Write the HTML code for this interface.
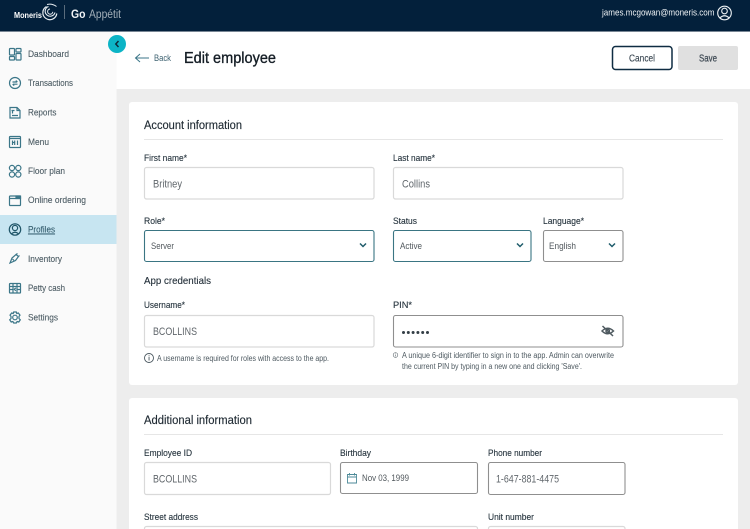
<!DOCTYPE html>
<html lang="en">
<head>
<meta charset="utf-8">
<title>Edit employee</title>
<style>
html,body{margin:0;padding:0;width:750px;height:529px;overflow:hidden;background:#ededed}
svg{display:block;font-family:"Liberation Sans",Arial,sans-serif;filter:blur(.3px)}
.nav{font-size:9.6px;fill:#4a5a62;stroke:#4a5a62;stroke-width:.1}
.lab{font-size:9.4px;fill:#26343e;stroke:#26343e;stroke-width:.12}
.val{font-size:10.8px;fill:#61676c}
.sel{font-size:9.4px;fill:#50575c}
.note{font-size:8px;fill:#4d5960}
.h{font-size:12.2px;fill:#1f2a33;stroke:#1f2a33;stroke-width:.15}
.ic{fill:none;stroke:#3b7688;stroke-width:1.2}
.lt{fill:#fff;stroke:#d9d9d9;stroke-width:1.2}
.dk{fill:#fff;stroke:#8f8f8f;stroke-width:1.1}
.tl{fill:#fff;stroke:#3a7583;stroke-width:1.1}
.chev{fill:none;stroke:#1f5c6b;stroke-width:1.5}
</style>
</head>
<body>
<svg width="750" height="529" viewBox="0 0 750 529" xmlns="http://www.w3.org/2000/svg">
<rect width="750" height="529" fill="#ededed"/>
<!-- header -->
<rect width="750" height="31.5" fill="#03203b"/>
<text x="14" y="18" font-size="8.4" font-weight="700" fill="#fff" textLength="28" lengthAdjust="spacingAndGlyphs">Moneris</text>
<g fill="none" stroke="#e8eef2">
<path d="M46.500 6.500A7 7 0 1 0 56.800 13.500" stroke-width="1.200"/>
<path d="M48.500 6.500A5 5 0 1 0 55 12.500" stroke-width="1.100"/>
<path d="M50 9A2.600 2.600 0 1 0 52.800 11.800" stroke-width="1"/>
<path d="M47 4.500Q52 3.200 56.500 6.500" stroke-width="1"/>
</g>
<rect x="64" y="5" width="1" height="14" fill="#5a6c7c"/>
<text x="71" y="18" font-size="12" font-weight="700" fill="#f2f4f6" textLength="14.500" lengthAdjust="spacingAndGlyphs">Go</text>
<text x="89" y="18" font-size="11.500" fill="#a3afb9" textLength="32" lengthAdjust="spacingAndGlyphs">Appétit</text>
<text x="602" y="15.500" font-size="9.200" fill="#eef2f5" textLength="112.500" lengthAdjust="spacingAndGlyphs">james.mcgowan@moneris.com</text>
<g fill="none" stroke="#eef2f5" stroke-width="1.100"><circle cx="724.500" cy="13" r="6.800"/><circle cx="724.500" cy="11" r="2.800"/><path d="M719.800 18Q724.500 13.500 729.200 18"/></g>
<!-- sidebar -->
<rect x="0" y="32" width="116.500" height="497" fill="#fafafa"/>
<rect x="0" y="215" width="116.500" height="29" fill="#c7e5f1"/>
<!-- main header -->
<rect x="116.500" y="32" width="633.500" height="57" fill="#fff"/>
<circle cx="117" cy="44" r="9" fill="#0cb4c6"/>
<path d="M118.500 41L115.800 44L118.500 47" fill="none" stroke="#0c2a3a" stroke-width="1.500"/>
<!-- nav icons -->
<g class="ic">
<rect x="9.500" y="48.500" width="5" height="6.500" rx=".8"/><rect x="9.500" y="56.500" width="5" height="3.500" rx=".8"/><rect x="16" y="48.500" width="5" height="3.500" rx=".8"/><rect x="16" y="53.500" width="5" height="6.500" rx=".8"/>
<circle cx="15" cy="83" r="5.500"/><path d="M12.500 82H17M15.800 80.600L17.400 82M17.500 84.200H13M14.200 85.600L12.600 84.200"/>
<path d="M10 107.500h7l3 3v7.500h-10zM17 107.500v3h3M12 115.500h6M12.500 110v3.500M14.500 110.500h-3"/>
<rect x="9.500" y="136.500" width="11" height="11" rx=".8"/><path d="M9.500 138.500h11M12.500 140.500v4.500M14.700 140.500v4.500M12.500 142.500h2.200M17.500 140.500v4.500"/>
<circle cx="12" cy="168" r="2.600"/><circle cx="18.300" cy="168" r="2.600"/><circle cx="12" cy="174.500" r="2.600"/><circle cx="18.300" cy="174.500" r="2.600"/>
<rect x="9.500" y="196" width="11" height="9.500" rx=".8"/><path d="M9.500 198.500h11"/><rect x="16" y="196" width="4.500" height="2.500" fill="#3b7688"/>
<circle cx="15" cy="229.500" r="5.700" stroke="#1f5568"/><circle cx="15" cy="228" r="2.600" stroke="#1f5568"/><path d="M11.500 233.800Q15 230.800 18.500 233.800" stroke="#1f5568"/>
<path d="M10 263L12 258L16 254.500L18.500 256.500L15.500 260.500ZM16 254.500L17.500 253.500M18.500 256.500L19.500 255.500M12.500 259L14 260.500"/>
<rect x="9.500" y="283.500" width="11" height="9.500" rx=".8"/><path d="M9.500 286.500h11M13 283.500v9.500M17 283.500v9.500M9.500 289.500h3.500M17 289.500h3.500M15.800 287.800L14.300 289.300L15.800 290.800"/>
<circle cx="15" cy="317.500" r="2.300"/><path d="M13.700 312L16.300 312L16.800 313.600L18.300 313L20 315.100L19 316.400L19 318.500L20.300 319.800L18.800 322L17.100 321.500L16.300 323H13.700L12.900 321.500L11.200 322L9.700 319.800L11 318.500L11 316.400L10 315.100L11.700 313L13.200 313.600Z"/>
</g>
<!-- nav labels -->
<g class="nav">
<text x="28" y="57" textLength="41" lengthAdjust="spacingAndGlyphs">Dashboard</text>
<text x="28" y="86" textLength="45" lengthAdjust="spacingAndGlyphs">Transactions</text>
<text x="28" y="115.500" textLength="28.500" lengthAdjust="spacingAndGlyphs">Reports</text>
<text x="28" y="145" textLength="21" lengthAdjust="spacingAndGlyphs">Menu</text>
<text x="28" y="174" textLength="37" lengthAdjust="spacingAndGlyphs">Floor plan</text>
<text x="28" y="203" textLength="58" lengthAdjust="spacingAndGlyphs">Online ordering</text>
<text x="28" y="232.500" textLength="27" lengthAdjust="spacingAndGlyphs" fill="#2d5c70" text-decoration="underline">Profiles</text>
<text x="28" y="262" textLength="34" lengthAdjust="spacingAndGlyphs">Inventory</text>
<text x="28" y="291" textLength="37" lengthAdjust="spacingAndGlyphs">Petty cash</text>
<text x="28" y="320.500" textLength="30" lengthAdjust="spacingAndGlyphs">Settings</text>
</g>
<!-- top bar -->
<path d="M149 58H136M140 54L135.500 58L140 62" fill="none" stroke="#3b7688" stroke-width="1"/>
<text x="154" y="61" font-size="9.600" fill="#3f6372" textLength="17" lengthAdjust="spacingAndGlyphs">Back</text>
<text x="184" y="63" font-size="15.500" fill="#141d25" stroke="#141d25" stroke-width=".35" textLength="92" lengthAdjust="spacingAndGlyphs">Edit employee</text>
<rect x="612.500" y="46.500" width="59.500" height="23" rx="3" fill="#fff" stroke="#0f2c42" stroke-width="1.500"/>
<text x="629" y="61.300" font-size="9.800" fill="#36434e" stroke="#36434e" stroke-width=".1" textLength="26" lengthAdjust="spacingAndGlyphs">Cancel</text>
<rect x="678" y="46" width="60" height="24" rx="2" fill="#e0e0e0"/>
<text x="699" y="61.300" font-size="9.800" fill="#3f4a54" stroke="#3f4a54" stroke-width=".25" textLength="18" lengthAdjust="spacingAndGlyphs">Save</text>
<!-- card 1 -->
<rect x="129" y="102" width="609" height="283" rx="3" fill="#fff"/>
<text class="h" x="144" y="129" textLength="98" lengthAdjust="spacingAndGlyphs">Account information</text>
<rect x="144" y="139" width="579" height="1" fill="#e6e6e6"/>
<g class="lab">
<text x="144" y="161" textLength="43" lengthAdjust="spacingAndGlyphs">First name*</text>
<text x="393" y="161" textLength="42" lengthAdjust="spacingAndGlyphs">Last name*</text>
<text x="144" y="224" textLength="21" lengthAdjust="spacingAndGlyphs">Role*</text>
<text x="393" y="224" textLength="24" lengthAdjust="spacingAndGlyphs">Status</text>
<text x="543" y="224" textLength="41" lengthAdjust="spacingAndGlyphs">Language*</text>
<text x="144" y="308" textLength="41" lengthAdjust="spacingAndGlyphs">Username*</text>
<text x="393" y="308" textLength="19" lengthAdjust="spacingAndGlyphs">PIN*</text>
</g>
<rect class="lt" x="144.500" y="167.500" width="229.500" height="31.500" rx="2"/>
<rect class="lt" x="393.500" y="167.500" width="229.500" height="31.500" rx="2"/>
<text class="val" x="153" y="187.500" textLength="29" lengthAdjust="spacingAndGlyphs">Britney</text>
<text class="val" x="402" y="187.500" textLength="28" lengthAdjust="spacingAndGlyphs">Collins</text>
<rect class="tl" x="144.500" y="230.500" width="229.500" height="31" rx="2"/>
<rect class="tl" x="393.500" y="230.500" width="137.500" height="31" rx="2"/>
<rect class="dk" x="543.500" y="230.500" width="79.500" height="31" rx="2"/>
<text class="sel" x="151" y="249" textLength="23" lengthAdjust="spacingAndGlyphs">Server</text>
<text class="sel" x="400" y="249" textLength="22" lengthAdjust="spacingAndGlyphs">Active</text>
<text class="sel" x="549" y="249" textLength="27" lengthAdjust="spacingAndGlyphs">English</text>
<path class="chev" d="M360 243.500L363 246.500L366 243.500"/>
<path class="chev" d="M517 243.500L520 246.500L523 243.500"/>
<path class="chev" d="M609 243.500L612 246.500L615 243.500"/>
<text x="144" y="284" font-size="10.200" fill="#26323c" stroke="#26323c" stroke-width=".12" textLength="67" lengthAdjust="spacingAndGlyphs">App credentials</text>
<rect class="lt" x="144.500" y="315.500" width="229.500" height="31.500" rx="2"/>
<rect class="dk" x="393.500" y="315.500" width="229.500" height="31.500" rx="2"/>
<text class="val" x="153" y="335" textLength="44" lengthAdjust="spacingAndGlyphs">BCOLLINS</text>
<g fill="#333d45"><circle cx="403.500" cy="332.500" r="1.500"/><circle cx="408.300" cy="332.500" r="1.500"/><circle cx="413.100" cy="332.500" r="1.500"/><circle cx="417.900" cy="332.500" r="1.500"/><circle cx="422.700" cy="332.500" r="1.500"/><circle cx="427.500" cy="332.500" r="1.500"/></g>
<g fill="none" stroke="#4f5a60" stroke-width="1.500"><path d="M602 331Q607.500 325.500 613.500 331Q607.500 336.500 602 331Z"/><circle cx="607.700" cy="331" r="1.700"/><path d="M602.500 326L613 336"/></g>
<circle cx="149" cy="358" r="4.500" fill="none" stroke="#4b5860" stroke-width=".9"/>
<rect x="148.600" y="357" width=".9" height="3.500" fill="#4b5860"/><rect x="148.600" y="355.300" width=".9" height="1" fill="#4b5860"/>
<text class="note" x="157" y="361" textLength="172" lengthAdjust="spacingAndGlyphs">A username is required for roles with access to the app.</text>
<circle cx="395.500" cy="355" r="2.300" fill="none" stroke="#5b666c" stroke-width=".6"/>
<rect x="395.200" y="354.600" width=".6" height="1.800" fill="#5b666c"/><rect x="395.200" y="353.500" width=".6" height=".6" fill="#5b666c"/>
<text class="note" x="402" y="358" textLength="212" lengthAdjust="spacingAndGlyphs">A unique 6-digit identifier to sign in to the app. Admin can overwrite</text>
<text class="note" x="402" y="369" textLength="180" lengthAdjust="spacingAndGlyphs">the current PIN by typing in a new one and clicking 'Save'.</text>
<!-- card 2 -->
<rect x="129" y="398" width="609" height="140" rx="3" fill="#fff"/>
<text class="h" x="144" y="424" textLength="108" lengthAdjust="spacingAndGlyphs">Additional information</text>
<rect x="144" y="434" width="579" height="1" fill="#e6e6e6"/>
<g class="lab">
<text x="144" y="456" textLength="48" lengthAdjust="spacingAndGlyphs">Employee ID</text>
<text x="340" y="456" textLength="31" lengthAdjust="spacingAndGlyphs">Birthday</text>
<text x="488" y="456" textLength="54" lengthAdjust="spacingAndGlyphs">Phone number</text>
<text x="144" y="520" textLength="54" lengthAdjust="spacingAndGlyphs">Street address</text>
<text x="488" y="520" textLength="46" lengthAdjust="spacingAndGlyphs">Unit number</text>
</g>
<rect class="lt" x="144.500" y="462.500" width="186" height="32" rx="2"/>
<rect class="dk" x="340.500" y="462.500" width="137" height="31" rx="2"/>
<rect class="dk" x="488.500" y="462.500" width="136.500" height="32" rx="2"/>
<text class="val" x="153" y="482.500" textLength="44" lengthAdjust="spacingAndGlyphs">BCOLLINS</text>
<path d="M347.500 474.500h9v8.500h-9zM347.500 477h9M349.500 473v2.500M354.500 473v2.500" fill="none" stroke="#4d8a98" stroke-width=".9"/>
<text class="sel" x="362" y="481" textLength="47" lengthAdjust="spacingAndGlyphs">Nov 03, 1999</text>
<text class="val" x="496" y="482.500" textLength="63" lengthAdjust="spacingAndGlyphs">1-647-881-4475</text>
<rect class="lt" x="144.500" y="526.500" width="333" height="20" rx="2"/>
<rect class="lt" x="488.500" y="526.500" width="136.500" height="20" rx="2"/>
</svg>
</body>
</html>
